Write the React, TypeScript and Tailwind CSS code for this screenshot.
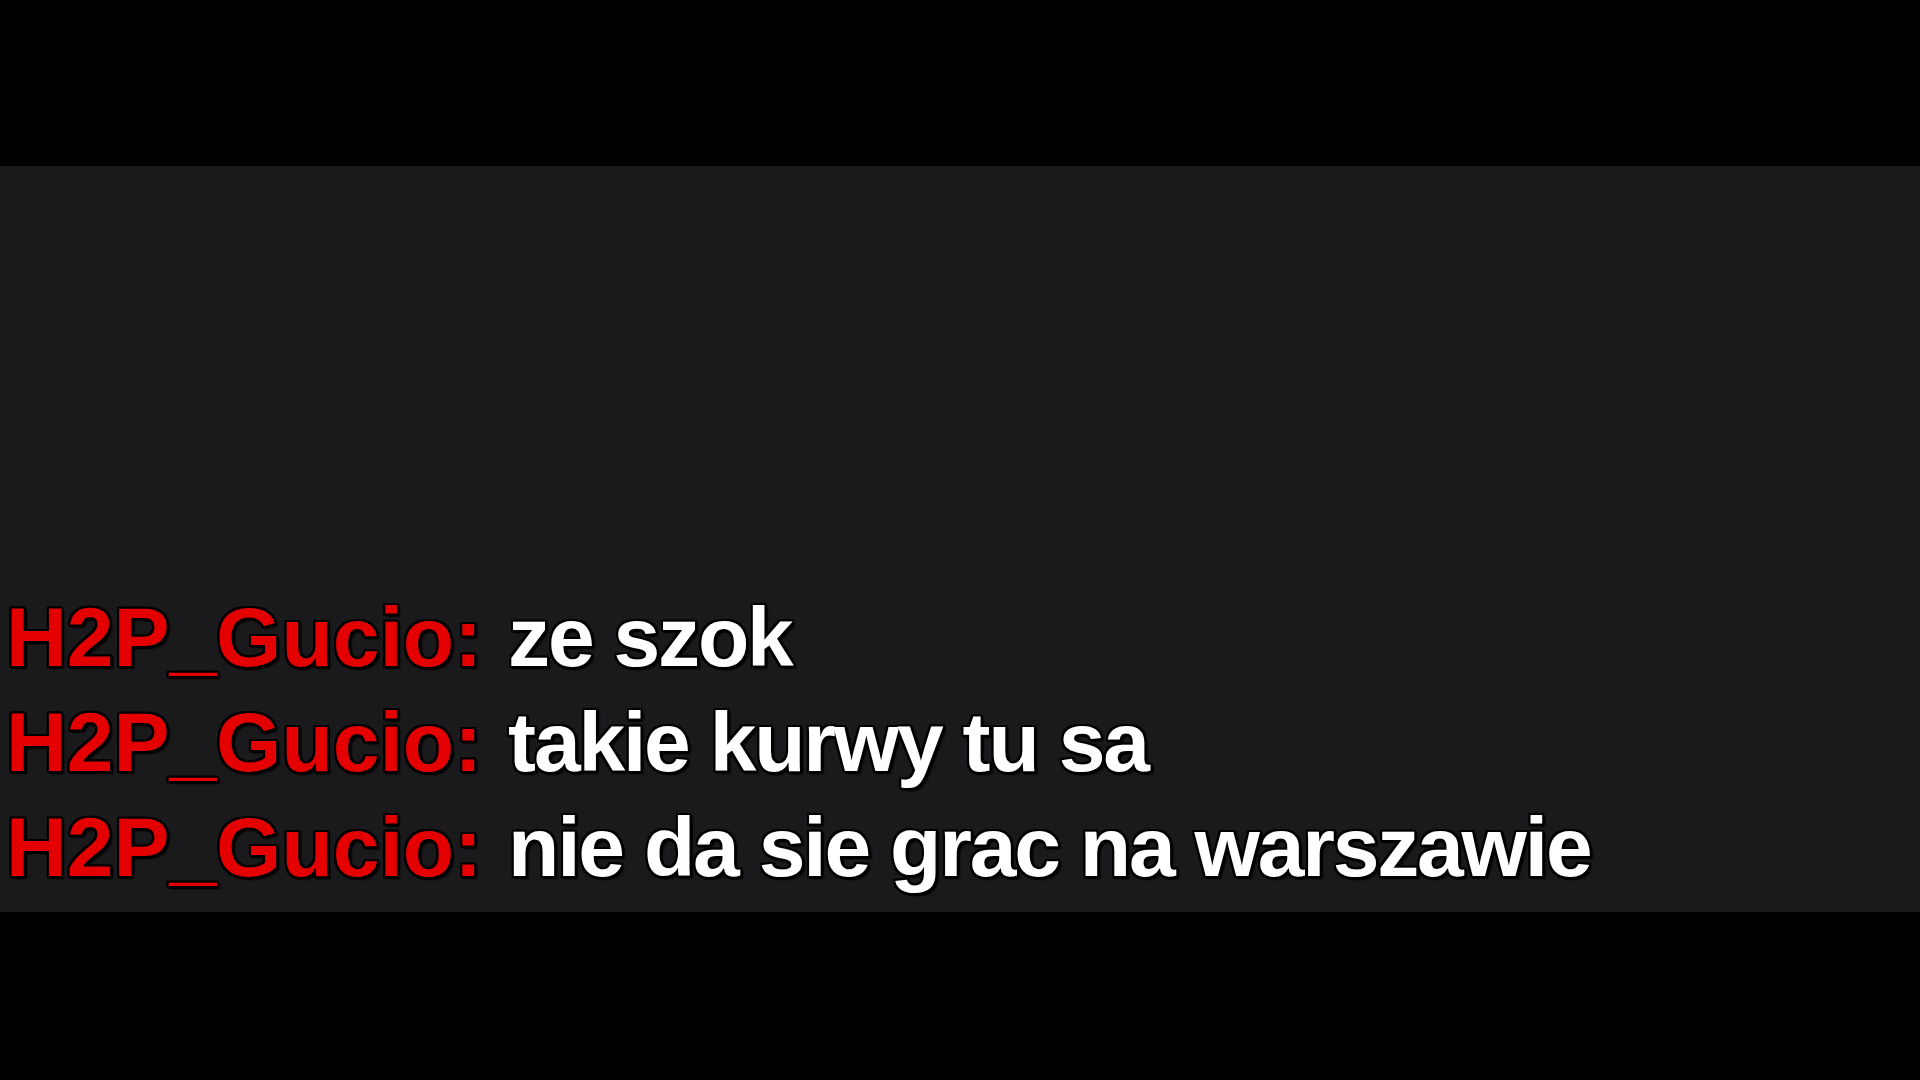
export default function App() {
  const lines = ["ze szok", "takie kurwy tu sa", "nie da sie grac na warszawie"];
  const shadow =
    "2px 2px 0 #000, -2px -2px 0 #000, 2px -2px 0 #000, -2px 2px 0 #000, 0 3px 0 #000, 3px 0 0 #000, 0 -2px 0 #000, -2px 0 0 #000, 3px 3px 2px #000";
  return (
    <div className="w-[1920px] h-[1080px] bg-black flex flex-col overflow-hidden">
      <div className="h-[166px] shrink-0 bg-black" />
      <div className="h-[746px] shrink-0 bg-[#1a1a1c] flex flex-col justify-end pb-[12px] pl-[6px]">
        {lines.map((m, i) => (
          <div
            key={i}
            className="whitespace-nowrap font-bold text-[84px] leading-[105px] flex items-baseline"
            style={{ fontFamily: '"Liberation Sans", Arial, sans-serif', textShadow: shadow }}
          >
            <span className="text-[#e40000]">H2P_Gucio:</span>
            <span className="text-white ml-[26px] tracking-[-2.2px]">{m}</span>
          </div>
        ))}
      </div>
      <div className="flex-1 bg-black" />
    </div>
  );
}
